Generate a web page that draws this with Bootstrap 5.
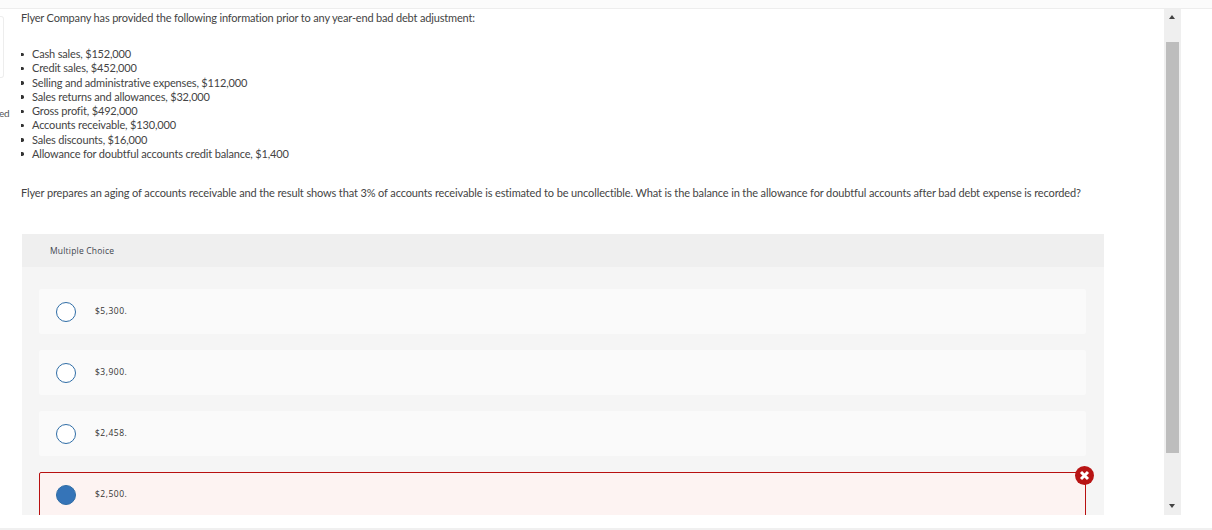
<!DOCTYPE html>
<html lang="en">
<head>
  <meta charset="UTF-8" />
  <title>Multiple Choice Question</title>
  <link rel="stylesheet" href="https://cdn.jsdelivr.net/npm/bootstrap@5.3.2/dist/css/bootstrap.min.css">
  <style>
    html, body { height: 530px; overflow: hidden; background: #fff; }
    body { font-family: Lato, "Liberation Sans", sans-serif; color: #444; font-size: 11px; letter-spacing: -.17px; }
    .top-strip { height: 9px; background: #fbfbfb; border-bottom: 1px solid #ededed; }
    .bottom-strip { height: 15px; border-bottom: 2px solid #f0f0f0; }
    .view-area { height: 506px; }
    .side-rail { width: 21px; overflow: hidden; }
    .side-box { width: 4px; height: 62px; margin-top: 7px; border: 1px solid #ededed; border-left: 0; border-radius: 0 3px 3px 0; }
    .side-label { margin-top: 29px; margin-left: -1px; font-size: 10px; line-height: 12px; color: #555; }
    .content-col { width: 1083px; overflow: hidden; }
    .intro-line { line-height: 14px; margin: 2px 0 0; }
    .fact-list { margin: 22px 0 0; padding-left: 11px; list-style: none; }
    .fact-list li { line-height: 14.28px; position: relative; }
    .fact-list li::before { content: ""; position: absolute; left: -12px; top: 5.5px; width: 3.5px; height: 3.5px; border-radius: 50%; background: #333; }
    .ask-line { line-height: 14px; margin: 25px 0 0; white-space: nowrap; letter-spacing: -.125px; }
    .choice-panel { margin: 34px 0 0 1px; background: #f5f5f5; width: 1082px; letter-spacing: 0; }
    .panel-head { height: 33px; background: #efefef; padding: 1px 0 0 28px; font-size: 8.5px; letter-spacing: .2px; color: #3f4650; font-family: "Open Sans", sans-serif; }
    .panel-body { padding: 22px 18px 0 17px; gap: 16px; }
    .choice-row { height: 45px; background: #fafafa; padding-left: 17px; border-radius: 2px; flex: none; }
    .choice-row.is-wrong { background: #fdf3f2; border: 1px solid #b81010; padding-left: 16px; position: relative; }
    .radio-dot { width: 20px; height: 20px; border-radius: 50%; border: 1.5px solid #2f6da6; background: #fff; flex: none; margin-right: 19px; }
    .is-wrong .radio-dot { background: #3574b8; }
    .choice-text { font-family: "Open Sans", sans-serif; font-size: 8.5px; color: #333; letter-spacing: .5px; }
    .wrong-badge { position: absolute; top: -7px; right: -9px; width: 19px; height: 19px; border-radius: 50%; background: #b81414; }
    .gap-col { width: 60px; }
    .scroll-track { width: 17px; background: #efefef; position: relative; }
    .scroll-thumb { position: absolute; top: 33px; left: 2px; width: 13px; height: 411px; background: #bdbdbd; }
    .arrow-up, .arrow-down { position: absolute; left: 5px; width: 0; height: 0; border-left: 3.5px solid transparent; border-right: 3.5px solid transparent; }
    .arrow-up { top: 6px; border-bottom: 4px solid #444; }
    .arrow-down { bottom: 7px; border-top: 4px solid #444; }
  </style>
</head>
<body>
  <div class="top-strip"></div>
  <div class="view-area d-flex">
    <div class="side-rail">
      <div class="side-box"></div>
      <div class="side-label">ed</div>
    </div>
    <div class="content-col">
      <p class="intro-line">Flyer Company has provided the following information prior to any year-end bad debt adjustment:</p>
      <ul class="fact-list">
        <li>Cash sales, $152,000</li>
        <li>Credit sales, $452,000</li>
        <li>Selling and administrative expenses, $112,000</li>
        <li>Sales returns and allowances, $32,000</li>
        <li>Gross profit, $492,000</li>
        <li>Accounts receivable, $130,000</li>
        <li>Sales discounts, $16,000</li>
        <li>Allowance for doubtful accounts credit balance, $1,400</li>
      </ul>
      <p class="ask-line">Flyer prepares an aging of accounts receivable and the result shows that 3% of accounts receivable is estimated to be uncollectible. What is the balance in the allowance for doubtful accounts after bad debt expense is recorded?</p>
      <div class="choice-panel">
        <div class="panel-head d-flex align-items-center">Multiple Choice</div>
        <div class="panel-body d-flex flex-column">
          <div class="choice-row d-flex align-items-center"><span class="radio-dot"></span><span class="choice-text">$5,300.</span></div>
          <div class="choice-row d-flex align-items-center"><span class="radio-dot"></span><span class="choice-text">$3,900.</span></div>
          <div class="choice-row d-flex align-items-center"><span class="radio-dot"></span><span class="choice-text">$2,458.</span></div>
          <div class="choice-row is-wrong d-flex align-items-center"><span class="radio-dot"></span><span class="choice-text">$2,500.</span>
            <span class="wrong-badge d-flex align-items-center justify-content-center">
              <svg width="11" height="11" viewBox="0 0 11 11"><path d="M2 2 9 9M9 2 2 9" stroke="#fff" stroke-width="3"/></svg>
            </span>
          </div>
        </div>
      </div>
    </div>
    <div class="gap-col"></div>
    <div class="scroll-track">
      <span class="arrow-up"></span>
      <div class="scroll-thumb"></div>
      <span class="arrow-down"></span>
    </div>
  </div>
  <div class="bottom-strip"></div>
  <script src="https://cdn.jsdelivr.net/npm/bootstrap@5.3.2/dist/js/bootstrap.bundle.min.js"></script>
</body>
</html>
